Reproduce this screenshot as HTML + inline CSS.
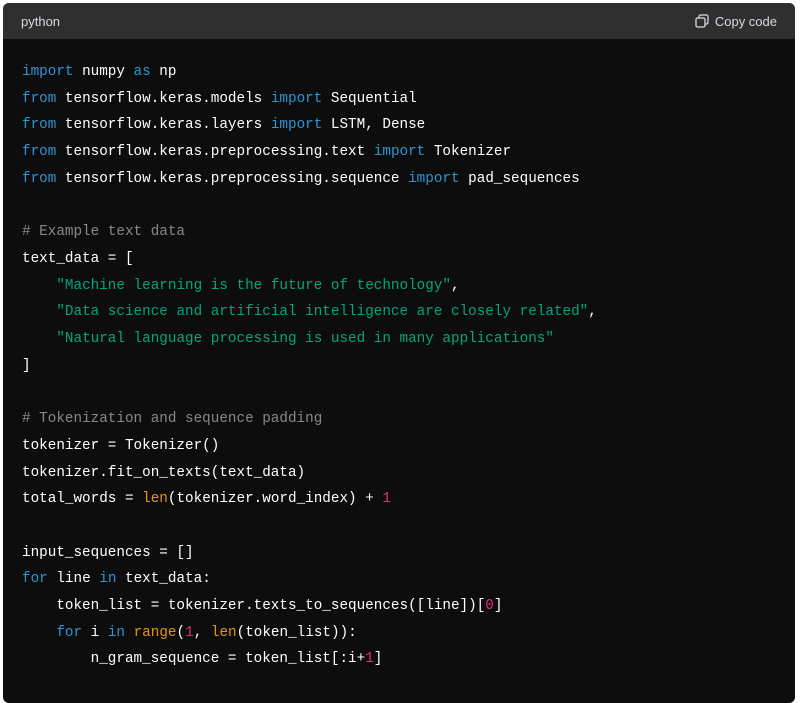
<!DOCTYPE html>
<html><head><style>
body{margin:0;background:#fff;width:800px;height:672px;overflow:hidden}
.box{position:absolute;left:3px;top:3px;width:792px;height:700px;background:#0d0d0d;border-radius:6px;overflow:hidden}
.hd{height:36px;background:#2f2f2f;color:#d9d9e3;font:13px "Liberation Sans",sans-serif;display:flex;align-items:center;justify-content:space-between;padding:0 18px}
.hd span.c{display:flex;align-items:center;gap:5px}
pre{margin:0;padding:20px 0 0 19px;font:14.3px/26.7px "Liberation Mono",monospace;color:#fff}
.k{color:#2e95d3}.s{color:#00a67d}.n{color:#df3079}.b{color:#e9950c}.m{color:#ffffff80}
</style></head><body>
<div class="box">
<div class="hd"><span>python</span><span class="c"><svg width="16" height="16" viewBox="0 0 16 16" fill="none" stroke="#d9d9e3" stroke-width="1.3"><rect x="2" y="5" width="9" height="9" rx="1.5"/><path d="M5 5V3.5A1.5 1.5 0 0 1 6.5 2h6A1.5 1.5 0 0 1 14 3.5v6a1.5 1.5 0 0 1-1.5 1.5H11"/></svg>Copy code</span></div>
<pre><span class="k">import</span> numpy <span class="k">as</span> np
<span class="k">from</span> tensorflow.keras.models <span class="k">import</span> Sequential
<span class="k">from</span> tensorflow.keras.layers <span class="k">import</span> LSTM, Dense
<span class="k">from</span> tensorflow.keras.preprocessing.text <span class="k">import</span> Tokenizer
<span class="k">from</span> tensorflow.keras.preprocessing.sequence <span class="k">import</span> pad_sequences

<span class="m"># Example text data</span>
text_data = [
    <span class="s">"Machine learning is the future of technology"</span>,
    <span class="s">"Data science and artificial intelligence are closely related"</span>,
    <span class="s">"Natural language processing is used in many applications"</span>
]

<span class="m"># Tokenization and sequence padding</span>
tokenizer = Tokenizer()
tokenizer.fit_on_texts(text_data)
total_words = <span class="b">len</span>(tokenizer.word_index) + <span class="n">1</span>

input_sequences = []
<span class="k">for</span> line <span class="k">in</span> text_data:
    token_list = tokenizer.texts_to_sequences([line])[<span class="n">0</span>]
    <span class="k">for</span> i <span class="k">in</span> <span class="b">range</span>(<span class="n">1</span>, <span class="b">len</span>(token_list)):
        n_gram_sequence = token_list[:i+<span class="n">1</span>]
</pre>
</div>
</body></html>
